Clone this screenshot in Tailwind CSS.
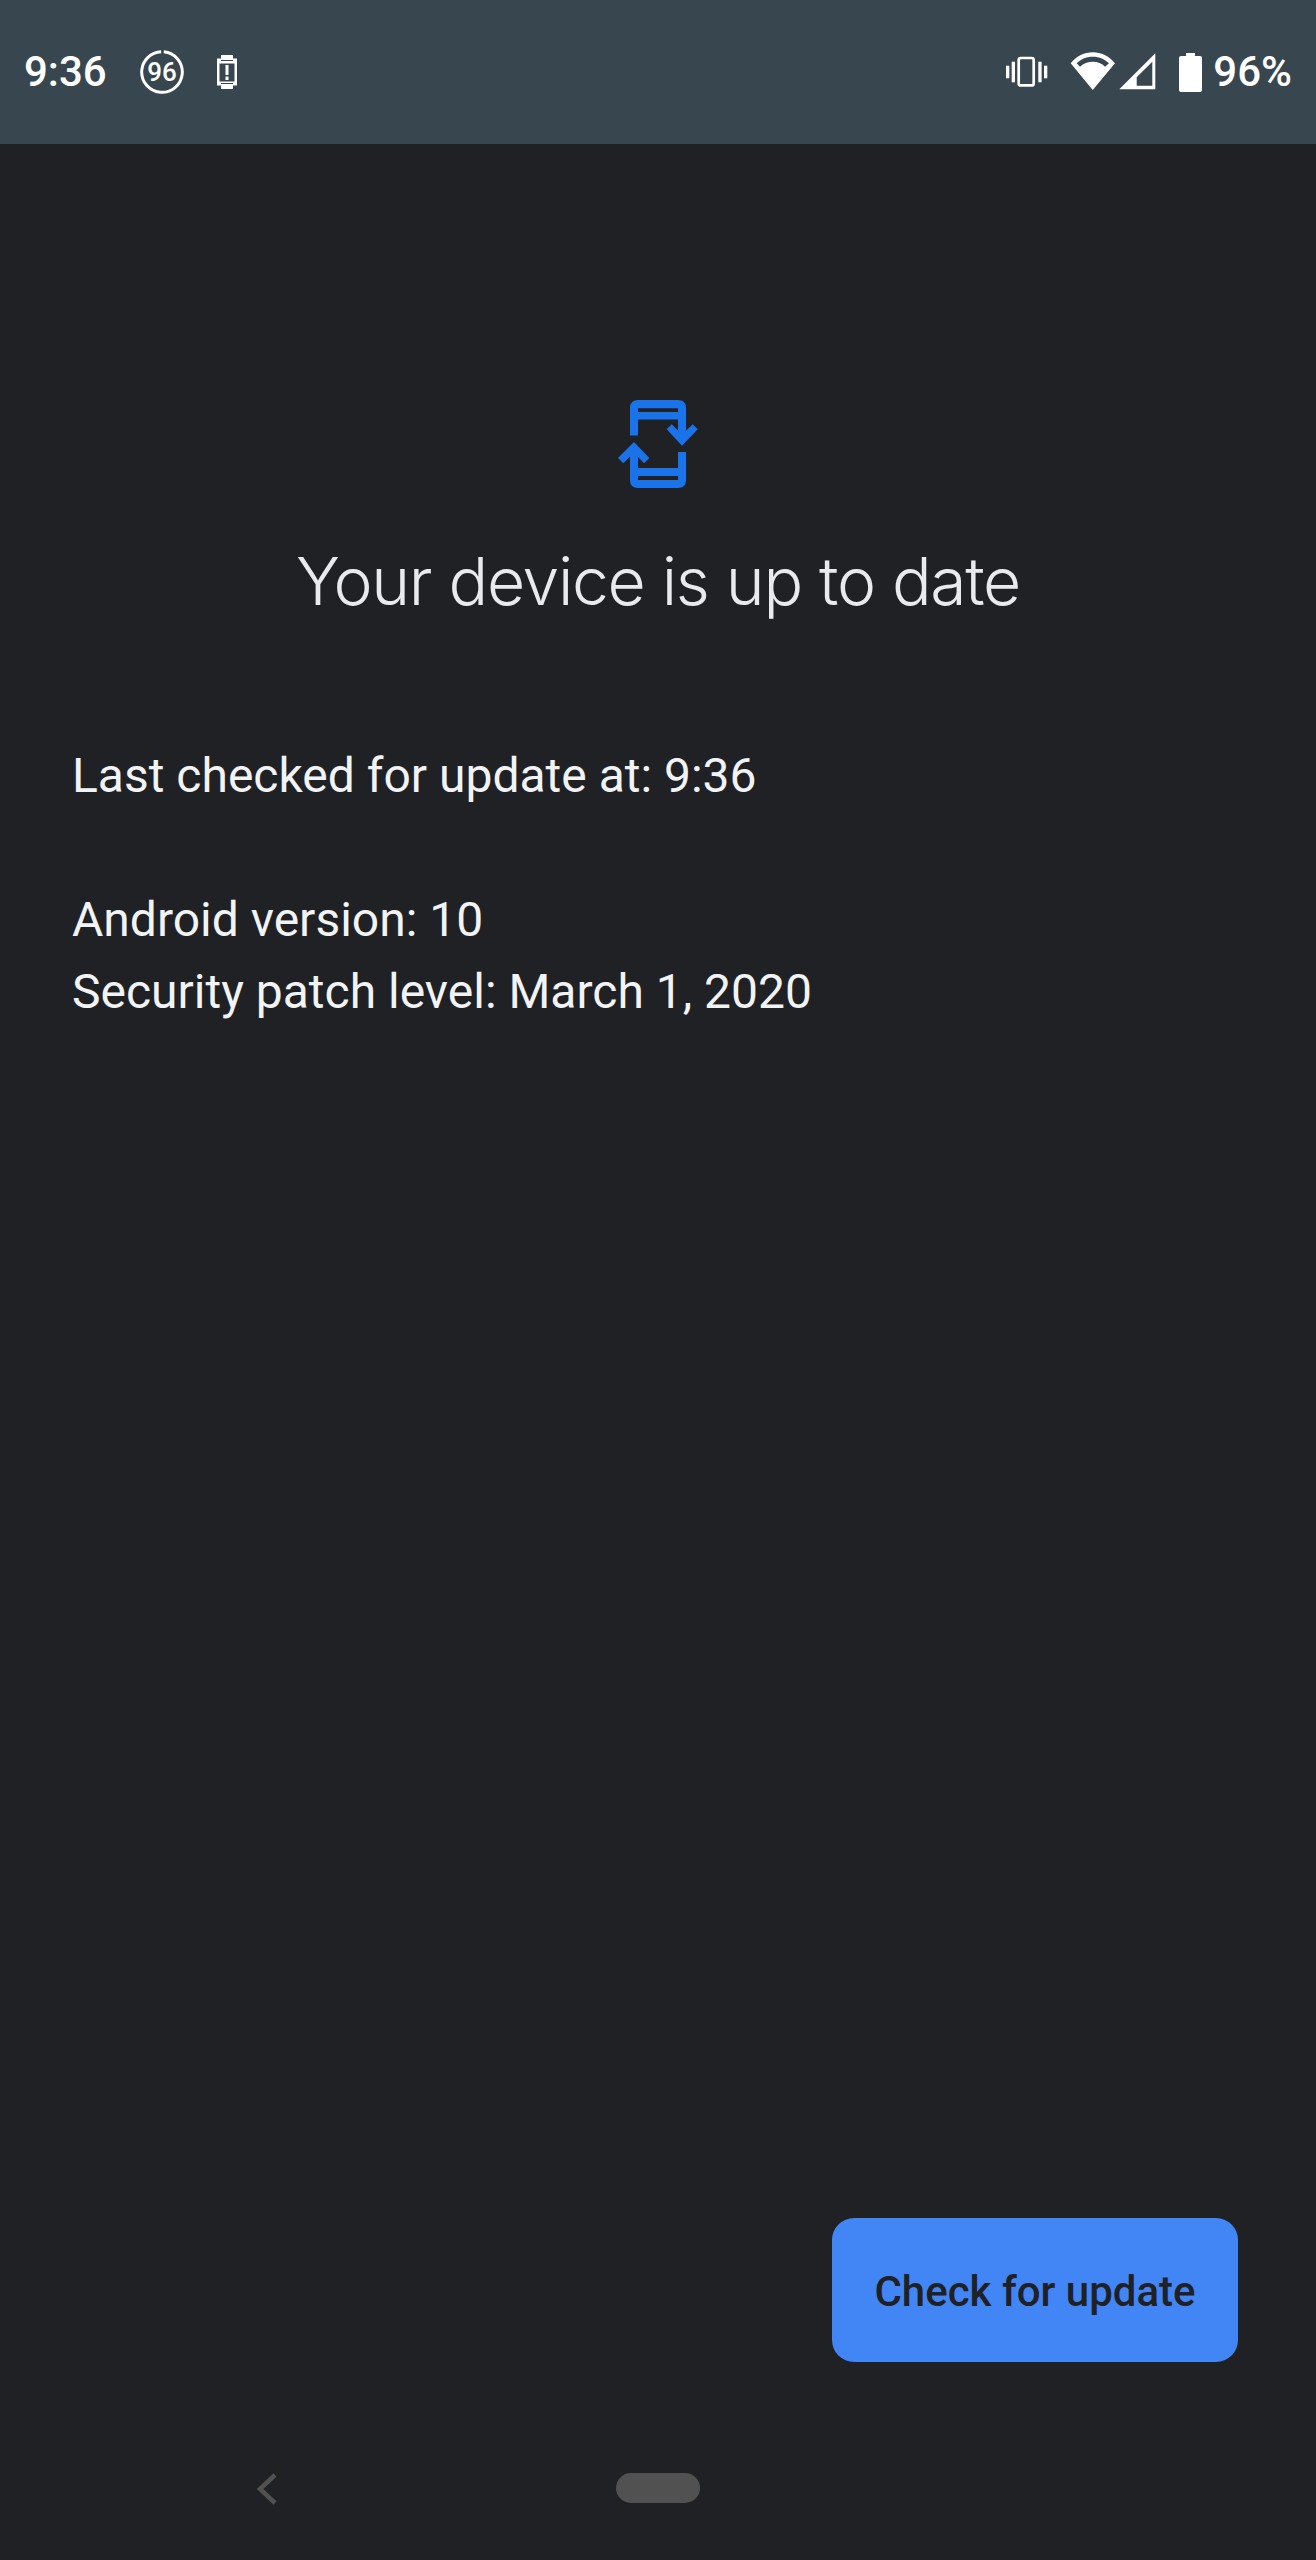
<!doctype html>
<html><head><meta charset="utf-8"><script src="https://cdn.jsdelivr.net/npm/@tailwindcss/browser@4"></script></head>
<body class="m-0">
<div class="w-[1316px] h-[2560px] bg-[#202124] flex flex-col font-['Roboto',sans-serif] overflow-hidden">
  <div class="h-[144px] bg-[#38474f] flex items-center justify-between pl-[24px] pr-[24px] text-white shrink-0">
    <div class="flex items-center">
      <span class="text-[42px] leading-[50px] font-medium w-[116px]">9:36</span>
      <div class="relative w-[44px] h-[44px] flex items-center justify-center">
        <svg class="absolute inset-0" width="44" height="44" viewBox="0 0 44 44"><circle cx="22" cy="22" r="20.3" fill="none" stroke="#fff" stroke-width="3" stroke-dasharray="124 3.500" transform="rotate(-85 22 22)"/></svg>
        <span class="text-[26px] leading-[30px] font-medium">96</span>
      </div>
      <svg class="ml-[32px]" width="22" height="34" viewBox="0 0 22 34"><path fill="#fff" fill-rule="evenodd" d="M5 0H17V3.500H21V30.500H17V34H5V30.500H1V3.500H5ZM3.500 8.500V26.500H18.500V8.500ZM5 5V6H17V5ZM5 28V29H17V28Z"/><path fill="#fff" d="M9.500 10H12.500V20H9.500ZM9.500 21.500H12.500V25H9.500Z"/></svg>
    </div>
    <div class="flex items-center">
      <svg width="42" height="32" viewBox="0 -1 42 32"><g fill="#fff"><rect x="0" y="8.700" width="3.300" height="12.600"/><rect x="5.700" y="4.700" width="3.300" height="20.600"/><rect x="32.300" y="4.700" width="3.300" height="20.600"/><rect x="38" y="8.700" width="3.300" height="12.600"/></g><rect x="12.700" y="1" width="15" height="27.400" rx="2" fill="none" stroke="#fff" stroke-width="2.700"/></svg>
      <svg class="ml-[22px]" width="46" height="40" viewBox="0 0 46 40"><path fill="#fff" fill-rule="evenodd" d="M22.700 0.300C31 0.300 39 4 45 11.300L22.700 38L0.700 11.300C6.500 4 14.500 0.300 22.700 0.300ZM22.700 4.700C16 4.700 10.500 7.300 6.700 11.300L10 14.700C13.500 11.500 18 9.700 22.700 9.700C27.500 9.700 32 11.500 35 14.700L39 11.300C35 7.300 29.500 4.700 22.700 4.700Z"/></svg>
      <svg class="ml-[3px]" width="39" height="39" viewBox="0 0 39 39"><path fill="#fff" fill-rule="evenodd" d="M36.300 0.300V36.300H0.300ZM33.300 8.700L17.700 24.300V32.700H33.300Z"/></svg>
      <svg class="ml-[21px]" width="23" height="39" viewBox="0 0 23 39"><path fill="#fff" d="M7 0H16V3H21Q23 3 23 5V37Q23 39 21 39H2Q0 39 0 37V5Q0 3 2 3H7Z"/></svg>
      <span class="ml-[11px] text-[42px] leading-[50px] font-medium">96%</span>
    </div>
  </div>
  <div class="flex justify-center pt-[236px] pl-[4px] shrink-0">
    <svg width="140" height="120" viewBox="0 0 140 120" class="block"><g fill="#1a73e8" fill-rule="evenodd"><path d="M48 20H88Q96 20 96 28V58H88V39.500H48V55.500H40V28Q40 20 48 20ZM48 28.300V32H88V28.300Z"/><path d="M81.700 44.300L92 54.700L102.700 44.300L107.700 49.300L92 65.700L76.700 49.300Z"/><path d="M40 68H48V88H88V72H96V100Q96 108 88 108H48Q40 108 40 100ZM48 96V100H88V96Z"/><path d="M44 62L59.300 78L54 83.300L44 72.500L33.300 83.300L28 78Z"/></g></svg>
  </div>
  <h1 class="text-center text-[#e8eaed] text-[66px] leading-[80px] tracking-[-0.02em] font-light font-['Inter',sans-serif] mt-[41px] shrink-0">Your device is up to date</h1>
  <div class="pl-[72px] text-[#f1f3f4] text-[48px] leading-[72px] mt-[119px] shrink-0">
    <p>Last checked for update at: 9:36</p>
    <p class="mt-[72px]">Android version: 10</p>
    <p>Security patch level: March 1, 2020</p>
  </div>
  <div class="mt-auto flex justify-end pr-[78px] shrink-0">
    <div class="w-[406px] h-[144px] pt-[2px] rounded-[22px] bg-[#4285f5] flex items-center justify-center text-[#202124] text-[42px] font-medium">Check for update</div>
  </div>
  <div class="h-[198px] shrink-0 flex items-start pt-[111px]">
    <svg class="ml-[256px]" width="22" height="32" viewBox="0 0 22 32"><path d="M19 2L4 16L19 30" fill="none" stroke="#515151" stroke-width="4.500"/></svg>
    <div class="ml-[338px] w-[84px] h-[30px] rounded-full bg-[#515151]"></div>
  </div>
</div>
</body></html>
